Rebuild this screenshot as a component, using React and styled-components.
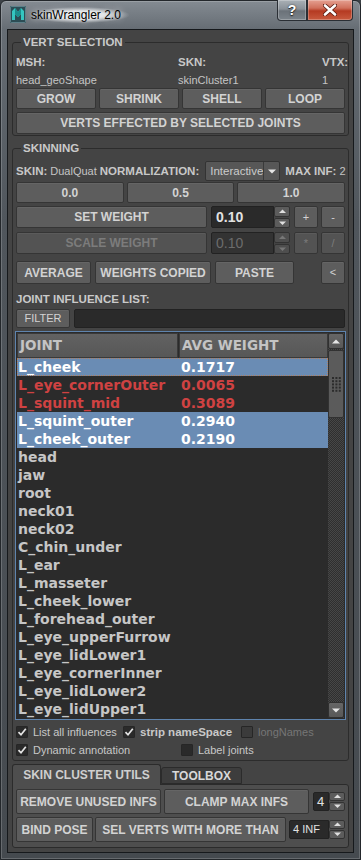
import React from 'react'
import styled, { createGlobalStyle } from 'styled-components'

const GlobalStyle = createGlobalStyle`
  html, body {
    margin: 0;
    padding: 0;
    background: #3d4247;
  }
  * { box-sizing: border-box; }
  #root { width: 361px; height: 860px; }
`

const UI = '"Liberation Sans", Arial, sans-serif'
const LIST = '"DejaVu Sans", Verdana, sans-serif'

const Window = styled.div`
  width: 361px;
  height: 860px;
  display: flex;
  flex-direction: column;
  padding: 0 6px 6px;
  border: 1px solid #23272b;
  border-radius: 6px 6px 0 0;
  background: linear-gradient(180deg, #848b92 0, #666d74 28px, #50565c 220px, #454a4f 100%);
  box-shadow: inset 0 0 0 1px rgba(255, 255, 255, 0.18);
  font-family: ${UI};
`

const TitleBar = styled.div`
  height: 28px;
  flex: none;
  display: flex;
  align-items: flex-start;
`

const TitleLeft = styled.div`
  flex: 1;
  display: flex;
  align-items: center;
  gap: 4px;
  padding: 5px 0 0 3px;
`

const TitleText = styled.div`
  font: 12px/16px ${UI};
  color: #000;
  padding: 0 8px 0 1px;
  background: radial-gradient(ellipse at center, rgba(236, 239, 241, 0.9) 35%, rgba(236, 239, 241, 0) 72%);
  text-shadow: 0 0 6px rgba(255, 255, 255, 0.9);
`

const Caption = styled.div`
  display: flex;
  margin-top: -1px;
  margin-right: 1px;
`

const CapBtn = styled.div`
  width: ${p => p.$w}px;
  height: 21px;
  display: flex;
  align-items: center;
  justify-content: center;
  border: 1px solid #2a2f35;
  border-top: none;
  border-radius: ${p => p.$r};
  background: ${p => p.$red
    ? 'linear-gradient(180deg, #e5a091 0, #d0705c 40%, #b53a22 55%, #c85a3e 100%)'
    : 'linear-gradient(180deg, #a9b0b6 0, #8a9198 45%, #6b7279 55%, #7c848b 100%)'};
  box-shadow: inset 0 0 0 1px rgba(255, 255, 255, 0.25);
  color: #fff;
  font: bold 14px/1 ${UI};
  text-shadow: 0 0 2px #333, 0 1px 1px #222;
`

const Client = styled.div`
  flex: 1;
  display: flex;
  flex-direction: column;
  background: #444;
  border: 1px solid #16191c;
  padding: 5px 4px 4px;
`

const Group = styled.fieldset`
  margin: ${p => p.$mt || 0}px 0 0;
  padding: 0 3px ${p => p.$pb || 1}px;
  border: 1px solid #2c2c2c;
  border-radius: 3px;
  min-width: 0;
  flex: none;
`

const Legend = styled.legend`
  font: bold 11.5px/14px ${UI};
  color: #cacaca;
  padding: 0 2px;
  margin-left: 5px;
`

const InfoGrid = styled.div`
  display: grid;
  grid-template-columns: 162px 1fr 23px;
  row-gap: 4px;
  margin-top: 6px;
  color: #c8c8c8;
`

const Label = styled.span`
  font: bold 11.5px/14px ${UI};
  color: #c8c8c8;
  white-space: nowrap;
`

const Value = styled.span`
  font: 11px/14px ${UI};
  color: #c4c4c4;
  white-space: nowrap;
`

const Row = styled.div`
  display: flex;
  align-items: ${p => p.$align || 'stretch'};
  gap: ${p => p.$gap ?? 3}px;
  height: ${p => p.$h}px;
  margin-top: ${p => p.$mt || 0}px;
`

const Btn = styled.div`
  flex: ${p => p.$w ? 'none' : 1};
  width: ${p => p.$w ? `${p.$w}px` : 'auto'};
  display: flex;
  align-items: center;
  justify-content: center;
  background: ${p => p.$disabled ? '#535353' : '#5d5d5d'};
  border: 1px solid #353535;
  border-radius: 2px;
  box-shadow: inset 0 1px 0 rgba(255, 255, 255, 0.05);
  color: ${p => p.$disabled ? '#7c7c7c' : '#d3d3d3'};
  font: ${p => p.$light ? 'normal 11px' : 'bold 12px'}/1 ${UI};
  white-space: nowrap;
  overflow: hidden;
`

const Spacer = styled.div`
  flex: 1;
`

const Combo = styled.div`
  width: 82px;
  height: 20px;
  display: flex;
  background: #575757;
  border: 1px solid #333;
  border-radius: 2px;
  margin: 0 2px 0 3px;
`

const ComboText = styled.div`
  flex: 1;
  padding-left: 4px;
  font: 11.5px/18px ${UI};
  color: #cbcbcb;
`

const ComboArrow = styled.div`
  width: 16px;
  display: flex;
  align-items: center;
  justify-content: center;
  border-left: 1px solid #3a3a3a;
`

const Spin = styled.div`
  width: ${p => p.$w}px;
  display: flex;
  align-self: ${p => p.$self || 'stretch'};
  height: ${p => p.$h ? `${p.$h}px` : 'auto'};
  margin-left: ${p => p.$ml || 0}px;
`

const SpinField = styled.div`
  flex: 1;
  display: flex;
  align-items: center;
  padding-left: ${p => p.$pl ?? 4}px;
  background: ${p => p.$disabled ? '#333' : '#2a2a2a'};
  border: 1px solid #222;
  border-radius: 2px 0 0 2px;
  color: ${p => p.$disabled ? '#6c6c6c' : '#e2e2e2'};
  font: ${p => p.$font};
`

const SpinArrows = styled.div`
  width: 16px;
  display: flex;
  flex-direction: column;
  gap: 1px;
`

const SpinArrow = styled.div`
  flex: 1;
  display: flex;
  align-items: center;
  justify-content: center;
  background: ${p => p.$disabled ? '#4e4e4e' : '#5c5c5c'};
  border: 1px solid #333;
  border-radius: 2px;
`

const SectionLabel = styled.div`
  margin-top: 8px;
  font: bold 11.5px/14px ${UI};
  color: #cacaca;
`

const FilterField = styled.div`
  flex: 1;
  background: #2a2a2a;
  border: 1px solid #222;
  border-radius: 2px;
`

const ListFrame = styled.div`
  margin: 3px -1px 0;
  display: flex;
  padding: 1px;
  background: #2b2b2b;
  border: 1px solid #5f84ae;
`

const ListMain = styled.div`
  flex: 1;
  min-width: 0;
`

const Grid = styled.div`
  display: grid;
  grid-template-columns: 161px 1fr;
  column-gap: ${p => p.$head ? 1 : 0}px;
  height: ${p => p.$head ? 25 : 18}px;
  background: ${p => p.$sel ? '#6a8cb4' : 'transparent'};
  outline: ${p => p.$focus ? '1px dotted #b08060' : 'none'};
  outline-offset: -1px;
`

const HeadCell = styled.div`
  background: linear-gradient(180deg, #626262, #575757);
  border: 1px solid #3a3a3a;
  padding-left: 2px;
  font: bold 13.5px/23px ${LIST};
  color: #c4c4c4;
`

const Cell = styled.div`
  padding-left: ${p => p.$pl}px;
  font: bold 14px/18px ${LIST};
  color: ${p => p.$tone === 'sel' ? '#fff' : p.$tone === 'red' ? '#cf4242' : '#c6c6c6'};
  white-space: nowrap;
  overflow: hidden;
`

const Scroll = styled.div`
  width: 16px;
  display: flex;
  flex-direction: column;
  background: repeating-conic-gradient(#474747 0 25%, #2f2f2f 0 50%) 0 0 / 2px 2px;
`

const ScrollBtn = styled.div`
  height: 16px;
  display: flex;
  align-items: center;
  justify-content: center;
  background: linear-gradient(180deg, #666, #585858);
  border: 1px solid #303030;
  border-radius: 2px;
`

const Handle = styled.div`
  height: 68px;
  margin-top: 1px;
  display: flex;
  align-items: center;
  justify-content: center;
  background: #5b5b5b;
  border: 1px solid #323232;
  border-radius: 2px;
`

const ScrollFill = styled.div`
  flex: 1;
`

const Checks = styled.div`
  display: grid;
  grid-template-columns: 107px 118px 1fr;
  grid-auto-rows: 18px;
  margin-top: 3px;
`

const CheckItem = styled.div`
  display: flex;
  align-items: center;
  gap: 5px;
  grid-column: ${p => p.$col || 'auto'};
  font: ${p => p.$bold ? 'bold 11.5px' : '11px'}/14px ${UI};
  color: ${p => p.$disabled ? '#767676' : '#c8c8c8'};
  white-space: nowrap;
`

const Box = styled.div`
  width: 12px;
  height: 12px;
  flex: none;
  display: flex;
  align-items: center;
  justify-content: center;
  background: ${p => p.$disabled ? '#3b3b3b' : '#2a2a2a'};
  border: 1px solid #262626;
  border-radius: 1px;
`

const TabBar = styled.div`
  display: flex;
  align-items: flex-end;
  height: 20px;
  margin-top: 3px;
  flex: none;
`

const Tab = styled.div`
  width: ${p => p.$w}px;
  height: ${p => p.$active ? 21 : 17}px;
  margin-bottom: ${p => p.$active ? -1 : 0}px;
  position: relative;
  z-index: ${p => p.$active ? 1 : 0};
  display: flex;
  align-items: center;
  justify-content: center;
  background: ${p => p.$active ? '#4e4e4e' : '#3d3d3d'};
  border: 1px solid #2b2b2b;
  border-bottom: ${p => p.$active ? 'none' : '1px solid #2b2b2b'};
  border-radius: 3px 3px 0 0;
  font: bold 12px/1 ${UI};
  color: ${p => p.$active ? '#cfcfcf' : '#d8d8d8'};
`

const Pane = styled.div`
  flex: none;
  height: 64px;
  display: flex;
  flex-direction: column;
  gap: 3px;
  padding: 4px 3px;
  background: #4e4e4e;
  border: 1px solid #2b2b2b;
  border-radius: 0 3px 3px 3px;
`

const Tri = ({ down, color = '#e6e6e6', w = 8 }) => (
  <svg width={w} height={w / 2 + 1} viewBox="0 0 8 5">
    <polygon points={down ? '0,0.5 8,0.5 4,4.5' : '0,4.5 8,4.5 4,0.5'} fill={color} />
  </svg>
)

const Check = () => (
  <svg width="10" height="10" viewBox="0 0 10 10">
    <path d="M1.5 5.2 L4 7.8 L8.8 1.8" fill="none" stroke="#e4e4e4" strokeWidth="1.7" />
  </svg>
)

const AppIcon = () => (
  <svg width="16" height="17" viewBox="0 0 16 17">
    <rect x="0" y="0" width="16" height="17" rx="1" fill="#2c4d55" />
    <rect x="0.5" y="0.5" width="15" height="16" rx="1" fill="none" stroke="#7fa4ab" strokeOpacity="0.6" />
    <path d="M2 14 L2 5 L5 2 L8 6 L11 2 L14 5 L14 14 L11 14 L11 8 L8 11 L5 8 L5 14 Z" fill="#35c6c0" />
    <path d="M5 2 L8 6 L11 2 L11 8 L8 11 L5 8 Z" fill="#1a8e8d" />
  </svg>
)

const CloseGlyph = () => (
  <svg width="14" height="12" viewBox="0 0 14 12">
    <path d="M2 1.5 L12 10.5 M12 1.5 L2 10.5" stroke="#5a1a10" strokeWidth="4.2" strokeLinecap="round" />
    <path d="M2 1.5 L12 10.5 M12 1.5 L2 10.5" stroke="#fff" strokeWidth="2.6" strokeLinecap="round" />
  </svg>
)

const Grip = () => (
  <svg width="9" height="15" viewBox="0 0 9 15">
    {[0, 1, 2, 3, 4].flatMap(r => [0, 1, 2].map(c => (
      <rect key={`${r}-${c}`} x={c * 3.4} y={r * 3.2} width="2" height="2" fill="#2c2c2c" />
    )))}
  </svg>
)

const joints = [
  ['L_cheek', '0.1717', 'sel'],
  ['L_eye_cornerOuter', '0.0065', 'red'],
  ['L_squint_mid', '0.3089', 'red'],
  ['L_squint_outer', '0.2940', 'sel'],
  ['L_cheek_outer', '0.2190', 'sel'],
  ['head'], ['jaw'], ['root'], ['neck01'], ['neck02'],
  ['C_chin_under'], ['L_ear'], ['L_masseter'], ['L_cheek_lower'],
  ['L_forehead_outer'], ['L_eye_upperFurrow'], ['L_eye_lidLower1'],
  ['L_eye_cornerInner'], ['L_eye_lidLower2'], ['L_eye_lidUpper1'],
]

const SpinBox = ({ w, value, font, disabled, pl, self, h, ml }) => (
  <Spin $w={w} $self={self} $h={h} $ml={ml}>
    <SpinField $font={font} $disabled={disabled} $pl={pl}>{value}</SpinField>
    <SpinArrows>
      <SpinArrow $disabled={disabled}><Tri color={disabled ? '#777' : '#e0e0e0'} w={7} /></SpinArrow>
      <SpinArrow $disabled={disabled}><Tri down color={disabled ? '#777' : '#e0e0e0'} w={7} /></SpinArrow>
    </SpinArrows>
  </Spin>
)

const App = () => {
  return (
    <>
      <GlobalStyle />
      <Window>
        <TitleBar>
          <TitleLeft>
            <AppIcon />
            <TitleText>skinWrangler 2.0</TitleText>
          </TitleLeft>
          <Caption>
            <CapBtn $w={30} $r="0 0 0 4px">?</CapBtn>
            <CapBtn $w={46} $r="0 0 4px 0" $red><CloseGlyph /></CapBtn>
          </Caption>
        </TitleBar>

        <Client>
          <Group>
            <Legend>VERT SELECTION</Legend>
            <InfoGrid>
              <Label>MSH:</Label>
              <Label>SKN:</Label>
              <Label>VTX:</Label>
              <Value>head_geoShape</Value>
              <Value>skinCluster1</Value>
              <Value>1</Value>
            </InfoGrid>
            <Row $h={21} $mt={1}>
              <Btn>GROW</Btn>
              <Btn>SHRINK</Btn>
              <Btn>SHELL</Btn>
              <Btn>LOOP</Btn>
            </Row>
            <Row $h={22} $mt={3}>
              <Btn>VERTS EFFECTED BY SELECTED JOINTS</Btn>
            </Row>
          </Group>

          <Group $mt={5}>
            <Legend>SKINNING</Legend>
            <Row $h={20} $mt={6} $align="center" $gap={3}>
              <Label>SKIN:</Label>
              <Value>DualQuat</Value>
              <Label>NORMALIZATION:</Label>
              <Combo>
                <ComboText>Interactive</ComboText>
                <ComboArrow><Tri down w={8} /></ComboArrow>
              </Combo>
              <Label>MAX INF:</Label>
              <Value>2</Value>
            </Row>
            <Row $h={21} $mt={1}>
              <Btn>0.0</Btn>
              <Btn>0.5</Btn>
              <Btn>1.0</Btn>
            </Row>
            <Row $h={22} $mt={3} $gap={4}>
              <Btn>SET WEIGHT</Btn>
              <SpinBox w={79} value="0.10" font={`bold 14px/1 ${UI}`} />
              <Btn $w={24} $light>+</Btn>
              <Btn $w={24} $light style={{ marginLeft: -1 }}>-</Btn>
            </Row>
            <Row $h={22} $mt={4} $gap={4}>
              <Btn $disabled>SCALE WEIGHT</Btn>
              <SpinBox w={79} value="0.10" font={`14px/1 ${UI}`} disabled />
              <Btn $w={24} $light $disabled>*</Btn>
              <Btn $w={24} $light $disabled style={{ marginLeft: -1 }}>/</Btn>
            </Row>
            <Row $h={23} $mt={7} $gap={4}>
              <Btn $w={75}>AVERAGE</Btn>
              <Btn $w={116}>WEIGHTS COPIED</Btn>
              <Btn $w={79}>PASTE</Btn>
              <Spacer />
              <Btn $w={24} $light>&lt;</Btn>
            </Row>
            <SectionLabel>JOINT INFLUENCE LIST:</SectionLabel>
            <Row $h={19} $mt={3} $gap={4}>
              <Btn $w={54} $light>FILTER</Btn>
              <FilterField />
            </Row>

            <ListFrame>
              <ListMain>
                <Grid $head>
                  <HeadCell>JOINT</HeadCell>
                  <HeadCell>AVG WEIGHT</HeadCell>
                </Grid>
                {joints.map(([name, w, tone], i) => (
                  <Grid key={name} $sel={tone === 'sel'} $focus={i === 0}>
                    <Cell $pl={1} $tone={tone}>{name}</Cell>
                    <Cell $pl={3} $tone={tone}>{w || ''}</Cell>
                  </Grid>
                ))}
              </ListMain>
              <Scroll>
                <ScrollBtn><Tri w={8} /></ScrollBtn>
                <Handle><Grip /></Handle>
                <ScrollFill />
                <ScrollBtn><Tri down w={8} /></ScrollBtn>
              </Scroll>
            </ListFrame>

            <Checks>
              <CheckItem><Box><Check /></Box>List all influences</CheckItem>
              <CheckItem $bold><Box><Check /></Box>strip nameSpace</CheckItem>
              <CheckItem $disabled><Box $disabled />longNames</CheckItem>
              <CheckItem $col="1 / 3"><Box><Check /></Box>Dynamic annotation</CheckItem>
              <CheckItem style={{ marginLeft: -60 }}><Box />Label joints</CheckItem>
            </Checks>
          </Group>

          <TabBar>
            <Tab $w={149} $active>SKIN CLUSTER UTILS</Tab>
            <Tab $w={81}>TOOLBOX</Tab>
          </TabBar>
          <Pane>
            <Row $h={25} $gap={3}>
              <Btn>REMOVE UNUSED INFS</Btn>
              <Btn>CLAMP MAX INFS</Btn>
              <SpinBox w={32} value="4" font={`13px/1 ${UI}`} self="center" h={19} ml={1} pl={3} />
            </Row>
            <Row $h={25} $gap={2}>
              <Btn $w={77}>BIND POSE</Btn>
              <Btn>SEL VERTS WITH MORE THAN</Btn>
              <SpinBox w={56} value="4 INF" font={`11px/1 ${UI}`} self="center" h={19} ml={1} pl={3} />
            </Row>
          </Pane>
        </Client>
      </Window>
    </>
  )
}

export default App
